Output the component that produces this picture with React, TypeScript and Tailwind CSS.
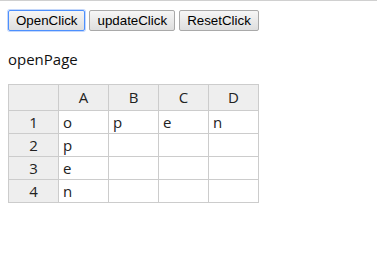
const cols = ['A', 'B', 'C', 'D'];
const rows = [
  ['o', 'p', 'e', 'n'],
  ['p', '', '', ''],
  ['e', '', '', ''],
  ['n', '', '', ''],
];

function Btn({ label, focused }: { label: string; focused?: boolean }) {
  return (
    <button
      className={`h-[21px] px-[7px] text-[13.33px] leading-none text-black bg-gradient-to-b from-[#f6f6f6] to-[#dedede] border rounded-[2px] ${
        focused ? 'border-[#4d90fe] shadow-[0_0_0_1px_#c5d8fb]' : 'border-[#a9a9a9]'
      }`}
      style={{ fontFamily: '"Liberation Sans", Arial, sans-serif' }}
    >
      {label}
    </button>
  );
}

export default function App() {
  return (
    <div className="w-[377px] h-[257px] bg-white border-t border-[#d0d0d0]" style={{ fontFamily: '"Open Sans", "Noto Sans", sans-serif' }}>
      <div className="flex gap-[4px] pl-[8px] pt-[9px]">
        <Btn label="OpenClick" focused />
        <Btn label="updateClick" />
        <Btn label="ResetClick" />
      </div>
      <div className="pl-[8px] mt-[18px] text-[15px] leading-[20px] text-[#111]">openPage</div>
      <table className="ml-[8px] mt-[15px] border-collapse text-[15px] text-[#222]">
        <thead>
          <tr className="h-[26px]">
            <th className="w-[50px] border border-[#cccccc] bg-[#eeeeee] font-normal" />
            {cols.map((c) => (
              <th key={c} className="w-[50px] border border-[#cccccc] bg-[#eeeeee] font-normal text-center">
                {c}
              </th>
            ))}
          </tr>
        </thead>
        <tbody>
          {rows.map((r, i) => (
            <tr key={i} className="h-[23px]">
              <td className="border border-[#cccccc] bg-[#eeeeee] text-center leading-none">{i + 1}</td>
              {r.map((v, j) => (
                <td key={j} className="border border-[#cccccc] pl-[4px] leading-none">
                  {v}
                </td>
              ))}
            </tr>
          ))}
        </tbody>
      </table>
    </div>
  );
}
